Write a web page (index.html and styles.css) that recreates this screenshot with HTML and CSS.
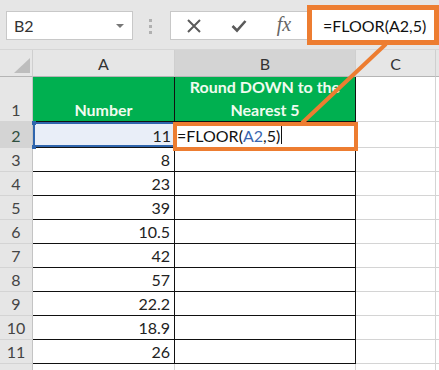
FILE: index.html
```html
<!DOCTYPE html>
<html lang="en">
<head>
    <meta charset="UTF-8">
    <title>FLOOR to the nearest 5</title>
    <link rel="stylesheet" href="styles.css">
</head>
<body>
    <div class="sheet">
        <div class="toolbar">
            <div class="name-box">
                <span>B2</span>
                <span class="caret"></span>
            </div>
            <div class="grip"><i></i><i></i><i></i></div>
            <div class="formula-bar">
                <span class="tool">
                    <svg width="16" height="16" viewBox="0 0 16 16"><path d="M2 2L14 14M14 2L2 14" stroke="#5a5a5a" stroke-width="2" fill="none"/></svg>
                </span>
                <span class="tool">
                    <svg width="16" height="14" viewBox="0 0 16 14"><path d="M1.5 7L6 11.5L14.5 2" stroke="#5a5a5a" stroke-width="2.6" fill="none"/></svg>
                </span>
                <span class="tool fx">fx</span>
                <div class="formula-box">=FLOOR(A2,5)</div>
            </div>
        </div>

        <div class="grid">
            <div class="corner"><span class="tri"></span></div>
            <div class="col-head">A</div>
            <div class="col-head selected">B</div>
            <div class="col-head">C</div>
            <div class="col-head rest"></div>

            <div class="row-head">1</div>
            <div class="cell head-cell a">Number</div>
            <div class="cell head-cell b">Round DOWN to the Nearest 5</div>
            <div class="cell c"></div>
            <div class="cell rest"></div>

            <div class="row-head selected">2</div>
            <div class="cell a ref">11</div>
            <div class="cell b active"><span class="edit">=FLOOR(<span class="ref-text">A2</span>,5)<span class="cursor"></span></span><span class="active-box"></span></div>
            <div class="cell c"></div>
            <div class="cell rest"></div>

            <div class="row-head">3</div><div class="cell a">8</div><div class="cell b"></div><div class="cell c"></div><div class="cell rest"></div>
            <div class="row-head">4</div><div class="cell a">23</div><div class="cell b"></div><div class="cell c"></div><div class="cell rest"></div>
            <div class="row-head">5</div><div class="cell a">39</div><div class="cell b"></div><div class="cell c"></div><div class="cell rest"></div>
            <div class="row-head">6</div><div class="cell a">10.5</div><div class="cell b"></div><div class="cell c"></div><div class="cell rest"></div>
            <div class="row-head">7</div><div class="cell a">42</div><div class="cell b"></div><div class="cell c"></div><div class="cell rest"></div>
            <div class="row-head">8</div><div class="cell a">57</div><div class="cell b"></div><div class="cell c"></div><div class="cell rest"></div>
            <div class="row-head">9</div><div class="cell a">22.2</div><div class="cell b"></div><div class="cell c"></div><div class="cell rest"></div>
            <div class="row-head">10</div><div class="cell a">18.9</div><div class="cell b"></div><div class="cell c"></div><div class="cell rest"></div>
            <div class="row-head">11</div><div class="cell a">26</div><div class="cell b"></div><div class="cell c"></div><div class="cell rest"></div>
            <div class="row-head"></div><div class="cell plain"></div><div class="cell plain"></div><div class="cell c"></div><div class="cell rest"></div>
        </div>

        <!-- callout line from the formula bar to B2 -->
        <svg class="callout" width="439" height="370" viewBox="0 0 439 370">
            <line x1="386" y1="44" x2="302" y2="123" stroke="#ed7d31" stroke-width="4"/>
        </svg>
    </div>
</body>
</html>
```

FILE: styles.css
```css
* {
    margin: 0;
    padding: 0;
    box-sizing: border-box;
}

body {
    font-family: Lato, "Open Sans", sans-serif;
    background-color: #fff;
    color: #222;
    width: 439px;
    height: 370px;
    overflow: hidden;
}

.sheet {
    position: relative;
    width: 439px;
    height: 370px;
    overflow: hidden;
}

/* Top bar */
.toolbar {
    height: 50px;
    background-color: #e6e6e6;
    border-bottom: 1px solid #d6d6d6;
    display: flex;
    align-items: flex-start;
    padding: 11px 0 0 6px;
}

.name-box {
    width: 127px;
    height: 29px;
    background-color: #fff;
    border: 1px solid #c8c8c8;
    display: flex;
    align-items: center;
    justify-content: space-between;
    padding: 0 8px 0 7px;
    font-size: 16px;
    color: #333;
}

.caret {
    width: 0;
    height: 0;
    border-left: 4px solid transparent;
    border-right: 4px solid transparent;
    border-top: 4px solid #777;
}

.grip {
    width: 3px;
    margin: 8px 0 0 16px;
    display: flex;
    flex-direction: column;
    gap: 3px;
}

.grip i {
    display: block;
    width: 3px;
    height: 3px;
    background-color: #b0b0b0;
}

.formula-bar {
    margin-left: 18px;
    flex: 1;
    height: 29px;
    background-color: #fff;
    border: 1px solid #c8c8c8;
    border-right: none;
    display: flex;
    align-items: center;
}

.tool {
    width: 45px;
    display: flex;
    justify-content: center;
    align-items: center;
}

.tool.fx {
    width: 46px;
    font-family: "Liberation Serif", serif;
    font-style: italic;
    font-size: 20px;
    color: #666;
    padding-bottom: 2px;
}

.formula-box {
    margin-left: auto;
    width: 132px;
    height: 40px;
    margin-top: -1px;
    background-color: #fff;
    border: 5px solid #ed7d31;
    display: flex;
    align-items: center;
    padding-left: 11px;
    font-size: 16px;
    color: #111;
}

/* Grid */
.grid {
    display: grid;
    grid-template-columns: 33px 142px 181px 80px 1fr;
    grid-template-rows: 27px 45px 26px repeat(9, 24px) 24px;
}

.corner,
.col-head {
    background-color: #e6e6e6;
    border-right: 1px solid #cfcfcf;
    border-bottom: 1px solid #b5b5b5;
}

.corner {
    position: relative;
}

.tri {
    position: absolute;
    right: 2px;
    bottom: 3px;
    width: 0;
    height: 0;
    border-left: 16px solid transparent;
    border-bottom: 15px solid #bdbdbd;
}

.col-head {
    display: flex;
    align-items: center;
    justify-content: center;
    font-size: 16px;
    color: #333;
}

.col-head.selected {
    background-color: #d4d4d4;
}

.row-head {
    background-color: #e6e6e6;
    border-right: 1px solid #c4c4c4;
    border-bottom: 1px solid #d4d4d4;
    display: flex;
    align-items: flex-end;
    justify-content: center;
    padding-bottom: 2px;
    font-size: 16px;
    color: #444;
}

.row-head.selected {
    background-color: #d4d4d4;
    color: #2f4f3f;
}

.cell {
    display: flex;
    align-items: flex-end;
    padding: 0 4px 2px;
    font-size: 16px;
    border-bottom: 1px solid #111;
}

.cell.a {
    justify-content: flex-end;
    border-right: 1px solid #111;
}

.cell.b {
    border-right: 1px solid #111;
}

.cell.c,
.cell.rest,
.cell.plain {
    border-right: 1px solid #d4d4d4;
    border-bottom: 1px solid #d4d4d4;
}

.cell.head-cell {
    background-color: #00b050;
    color: #f0fbef;
    font-weight: bold;
    justify-content: center;
    text-align: center;
    line-height: 23px;
    padding-bottom: 0;
}

.cell.ref {
    position: relative;
    background-color: #e9eef8;
    box-shadow: inset 0 0 0 2px #2f65ad;
    border-right: none;
}

.cell.ref::before,
.cell.ref::after {
    content: "";
    position: absolute;
    left: -1px;
    width: 4px;
    height: 4px;
    background-color: #2f65ad;
}

.cell.ref::before {
    top: -1px;
}

.cell.ref::after {
    bottom: -2px;
}

.cell.active {
    position: relative;
    padding-left: 2px;
    align-items: center;
}

.edit {
    display: flex;
    align-items: center;
    position: relative;
    z-index: 1;
    color: #111;
    padding-top: 3px;
}

.ref-text {
    color: #3a66b0;
}

.cursor {
    display: inline-block;
    width: 1px;
    height: 18px;
    background-color: #111;
    margin-left: 1px;
}

.active-box {
    position: absolute;
    left: -2px;
    right: -3px;
    top: 0;
    bottom: -4px;
    border: 4px solid #ed7d31;
}

.callout {
    position: absolute;
    left: 0;
    top: 0;
    pointer-events: none;
}
```
